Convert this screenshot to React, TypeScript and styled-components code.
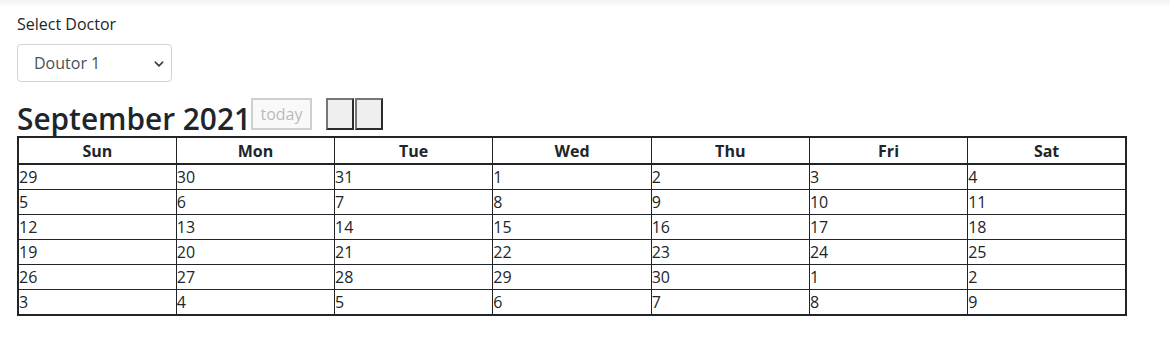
import React, { useState } from 'react';
import styled, { createGlobalStyle } from 'styled-components';

const GlobalStyle = createGlobalStyle`
  * { box-sizing: border-box; }
  body {
    margin: 0;
    background: #fff;
    color: #212529;
    font-family: "Open Sans", "Noto Sans", sans-serif;
    font-size: 16px;
    line-height: 1.5;
  }
`;

const doctors = ['Doutor 1', 'Doutor 2', 'Doutor 3'];
const weekDays = ['Sun', 'Mon', 'Tue', 'Wed', 'Thu', 'Fri', 'Sat'];

// grade fixa de setembro/2021 (começa no domingo 29/08)
const buildWeeks = () => {
  const start = new Date(2021, 7, 29);
  const weeks: number[][] = [];
  for (let w = 0; w < 6; w++) {
    const row: number[] = [];
    for (let d = 0; d < 7; d++) {
      const date = new Date(start);
      date.setDate(start.getDate() + w * 7 + d);
      row.push(date.getDate());
    }
    weeks.push(row);
  }
  return weeks;
};

const App = () => {
  const [doctor, setDoctor] = useState(doctors[0]);
  const weeks = buildWeeks();

  return (
    <>
      <GlobalStyle />
      <StyledShadow />
      <StyledPage>
        <StyledLabel htmlFor="doctor">Select Doctor</StyledLabel>
        <StyledSelectWrap>
          <StyledSelect id="doctor" value={doctor} onChange={(e) => setDoctor(e.target.value)}>
            {doctors.map((d) => (
              <option key={d} value={d}>{d}</option>
            ))}
          </StyledSelect>
          <StyledChevron viewBox="0 0 16 16">
            <path d="M2 5l6 6 6-6" fill="none" stroke="#343a40" strokeWidth="2.4" strokeLinecap="round" strokeLinejoin="round" />
          </StyledChevron>
        </StyledSelectWrap>

        <StyledToolbar>
          <StyledTitle>September 2021</StyledTitle>
          <StyledTodayButton disabled>today</StyledTodayButton>
          <StyledNavGroup>
            <StyledNavButton aria-label="prev" />
            <StyledNavButton aria-label="next" />
          </StyledNavGroup>
        </StyledToolbar>

        <StyledTable>
          <thead>
            <tr>
              {weekDays.map((d) => (
                <StyledHeadCell key={d}>{d}</StyledHeadCell>
              ))}
            </tr>
          </thead>
          <tbody>
            {weeks.map((row, i) => (
              <tr key={i}>
                {row.map((day, j) => (
                  <StyledDayCell key={j}>{day}</StyledDayCell>
                ))}
              </tr>
            ))}
          </tbody>
        </StyledTable>
      </StyledPage>
    </>
  );
};

export default App;

const StyledShadow = styled.div`
  height: 6px;
  background: linear-gradient(#f2f2f2, #fdfdfd);
`;

const StyledPage = styled.div`
  padding: 6px 43px 0 17px;
`;

const StyledLabel = styled.label`
  display: block;
  margin-bottom: 8px;
`;

const StyledSelectWrap = styled.div`
  position: relative;
  width: 155px;
`;

const StyledSelect = styled.select`
  appearance: none;
  display: block;
  width: 155px;
  height: 38px;
  padding: 0 36px 0 16px;
  font-family: inherit;
  font-size: 16px;
  color: #495057;
  background: #fff;
  border: 1px solid #ced4da;
  border-radius: 4px;
  outline: none;
`;

const StyledChevron = styled.svg`
  position: absolute;
  right: 8px;
  top: 15px;
  width: 10px;
  height: 10px;
  pointer-events: none;
`;

const StyledToolbar = styled.div`
  display: flex;
  align-items: flex-end;
  margin-top: 16px;
  height: 38px;
`;

const StyledTitle = styled.h2`
  margin: 0 0 -2px;
  font-size: 29.8px;
  font-weight: 600;
  line-height: 38px;
  color: #212529;
`;

const StyledTodayButton = styled.button`
  height: 32px;
  width: 61px;
  margin: 0 14px 6px 0;
  padding: 0;
  font-family: inherit;
  font-size: 16px;
  color: #b9b9b9;
  background: #f9f9f9;
  border: 2px solid #cfcfcf;
`;

const StyledNavGroup = styled.div`
  display: flex;
  margin-bottom: 6px;
`;

const StyledNavButton = styled.button`
  width: 28px;
  height: 32px;
  padding: 0;
  background: #efefef;
  border: 2px solid;
  border-color: #767676 #2b2b2b #2b2b2b #767676;
  & + & {
    margin-left: 1px;
  }
`;

const StyledTable = styled.table`
  width: 1110px;
  margin-top: 0;
  border-collapse: collapse;
  table-layout: fixed;
  border: 2px solid #212529;
`;

const StyledHeadCell = styled.th`
  height: 27px;
  padding: 0;
  font-weight: 700;
  text-align: center;
  line-height: 24px;
  border: 1px solid #212529;
  border-bottom: 2px solid #212529;
`;

const StyledDayCell = styled.td`
  height: 25px;
  padding: 0;
  vertical-align: top;
  line-height: 24px;
  border: 1px solid #212529;
`;
